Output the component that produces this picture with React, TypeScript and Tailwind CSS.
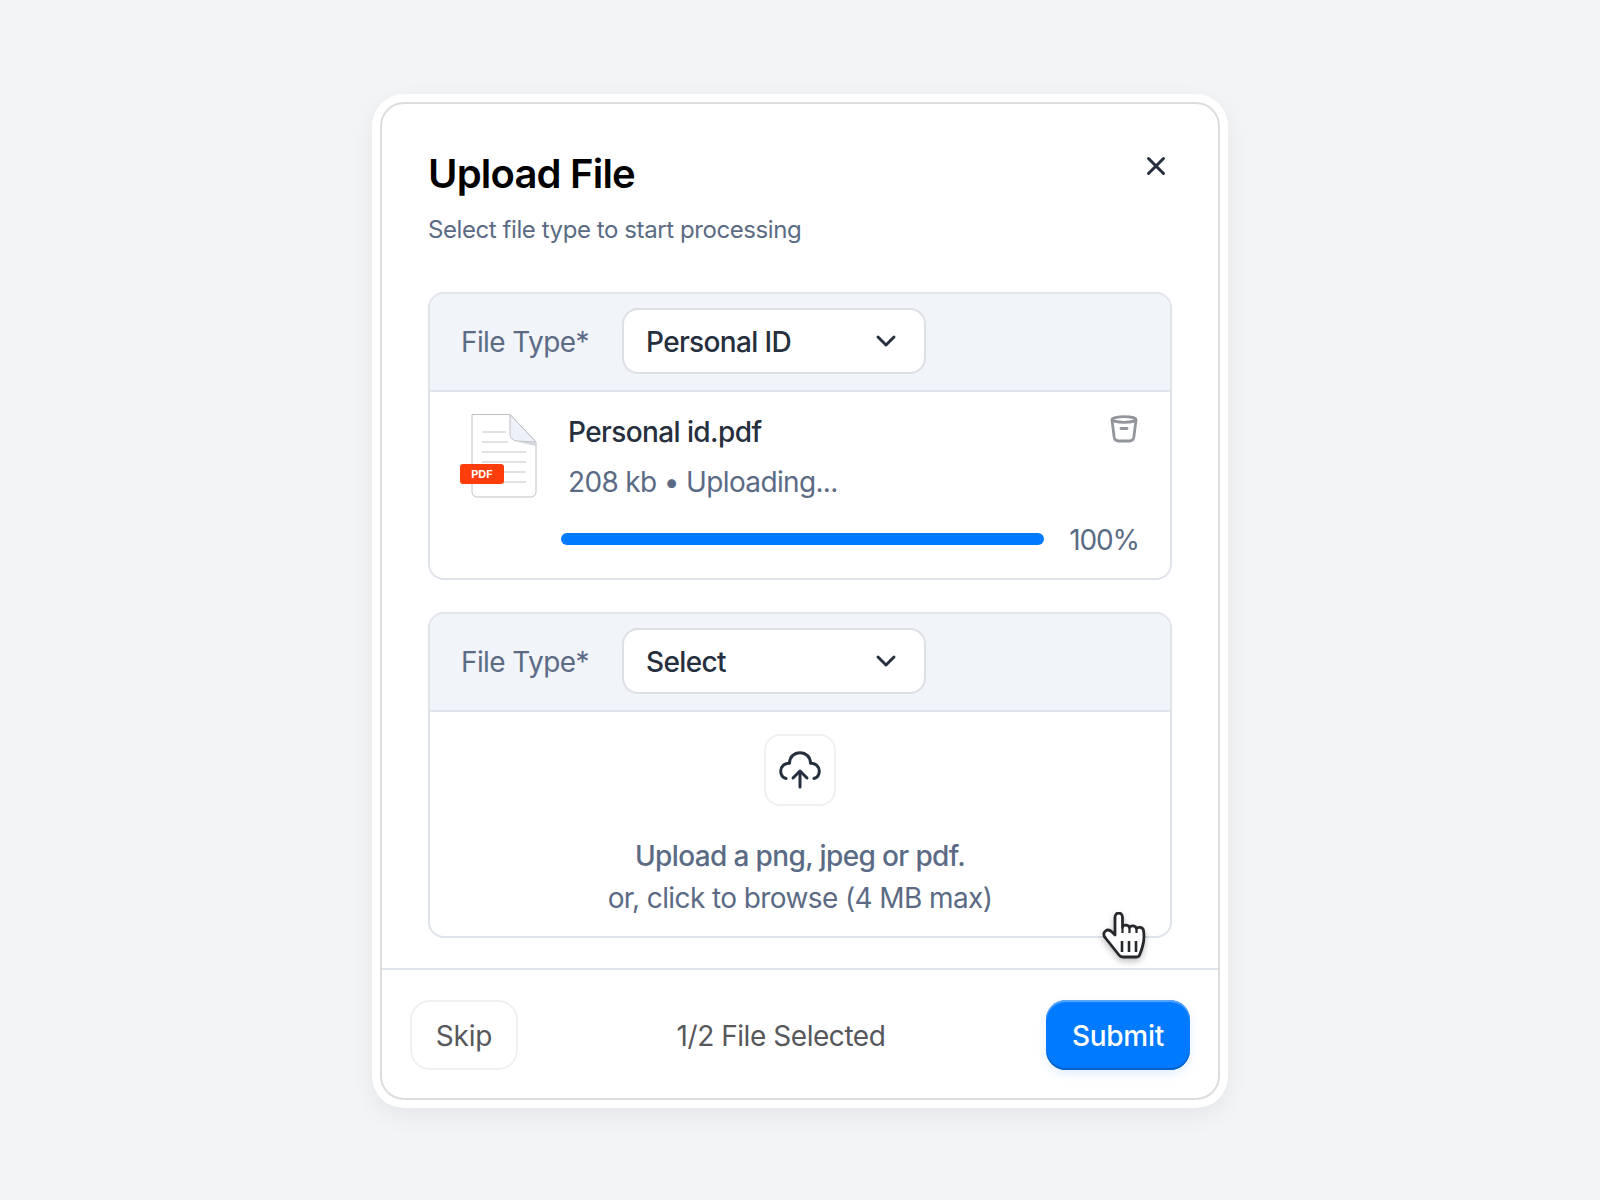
import React from 'react';
import { ChevronDown, X } from 'lucide-react';

const FileTypeHeader: React.FC<{ value: string }> = ({ value }) => (
  <div className="flex h-[98px] items-center border-b-2 border-[#dfe3ea] bg-[#f1f4f9] pl-[31px]">
    <span className="w-[161px] text-[28px] tracking-[-0.6px] text-[#5b6b85]">File Type*</span>
    <button className="-mt-[2px] flex h-[66px] w-[304px] items-center justify-between rounded-2xl border-2 border-[#dcdfe4] bg-white pr-[22px] pl-[22px] text-[28px] font-medium tracking-[-0.65px] text-[#262f3d]">
      <span className="mt-[2px]">{value}</span>
      <ChevronDown className="h-8 w-8 text-[#262f3d]" strokeWidth={2.2} />
    </button>
  </div>
);

const PdfIcon = () => (
  <svg width="80" height="88" viewBox="0 0 80 88" fill="none">
    <path d="M14 2.500H52L78 30V80a5 5 0 0 1-5 5H19a5 5 0 0 1-5-5Z" fill="#fff" stroke="#bdc0c5" strokeWidth="1" />
    <path d="M52 2.500V22a7 7 0 0 0 7 7L78 30Z" fill="#eef1f7" stroke="#bdc0c5" strokeWidth="1" />
    <path d="M56 29L78 30.500V34Z" fill="#d3d6db" />
    <g stroke="#c4c6c9" strokeWidth="1.2">
      <path d="M24 20H48" />
      <path d="M24 30H50" />
      <path d="M24 40H68" />
      <path d="M24 50H68" />
      <path d="M46 60H68" />
      <path d="M46 70H68" />
    </g>
    <rect x="2" y="52" width="44" height="20" rx="3" fill="#ff3d0a" />
    <text x="24" y="66" textAnchor="middle" fill="#fff" fontSize="11" fontWeight="700" fontFamily="Inter, sans-serif">PDF</text>
  </svg>
);

const TrashIcon = () => (
  <svg width="30" height="30" viewBox="0 0 30 30" fill="none" stroke="#92969c" strokeWidth="2.8" strokeLinecap="round" strokeLinejoin="round">
    <ellipse cx="15" cy="5.500" rx="12" ry="2.800" />
    <path d="M3 6l2.200 17.500a4.500 4.500 0 0 0 4.400 3.500h10.800a4.500 4.500 0 0 0 4.400-3.500L27 6" />
    <path d="M12 14.500h6" />
  </svg>
);

const CloudIcon = () => (
  <svg width="42" height="38" viewBox="0 0 42 38" fill="none" stroke="#262f3d" strokeWidth="3" strokeLinecap="round" strokeLinejoin="round">
    <path d="M7 27.500C3.500 26.500 1.700 23.500 1.700 20C1.700 15.500 5.500 12 10.500 12.300C10.500 6 15 1.700 21 1.700C27 1.700 31.500 6 31.500 12.300C36.500 12 40.300 15.500 40.300 20C40.300 23.500 38.500 26.500 35 27.500" />
    <path d="M21 36V21" />
    <path d="M14 27l7-7 7 7" />
  </svg>
);

const HandCursor = () => (
  <svg width="46" height="50" viewBox="0 0 46 50" className="drop-shadow-[0_3px_3px_rgba(0,0,0,0.25)]">
    <path
      d="M13 5.500c0-6 7.500-6 7.500 0V15c1-2.500 6-2.500 7 .5 1.500-2.500 6-2 7 1 1.500-2 6.500-1.500 7 2 .8 5 .5 11-1 16-.7 2.500-1.500 5-2.500 7.500-.5 2-1.500 3-3.500 3H21c-2 0-3-.5-4-2L3.500 26c-2.500-3-2-5.500 0-7 2-1.500 4.500-1 6.500 1l3 3Z"
      fill="#fff"
      stroke="#26282c"
      strokeWidth="2.800"
      strokeLinejoin="round"
    />
    <path d="M20.500 15v6M27.500 15.500V21M34.500 16.500V21" stroke="#26282c" strokeWidth="2.200" fill="none" />
    <path d="M20 29v11M27 29v11M34 29v11" stroke="#26282c" strokeWidth="2.600" fill="none" />
  </svg>
);

export default function App() {
  return (
    <div className="flex h-[1200px] justify-center bg-[#f3f4f6] pt-[94px] font-['Inter',sans-serif]">
      <div className="h-[1014px] w-[856px] rounded-[32px] bg-white p-2 shadow-[0_8px_24px_rgba(17,24,39,0.06)]">
        <div className="flex h-full flex-col rounded-3xl border-2 border-[#dcdde0]">
          <div className="relative px-[46px] pt-[46px]">
            <h1 className="text-[40px] leading-[48px] font-semibold tracking-[-0.8px] text-black">Upload File</h1>
            <p className="mt-[16px] text-2xl leading-8 tracking-[-0.42px] text-[#5b6b85]">Select file type to start processing</p>
            <button className="absolute top-[47px] right-[47px] text-[#262f3d]">
              <X className="h-[30px] w-[30px]" strokeWidth={2.4} />
            </button>
          </div>

          <div className="mt-[46px] flex flex-col gap-8 px-[46px]">
            <div className="h-[288px] overflow-hidden rounded-2xl border-2 border-[#dfe3ea]">
              <FileTypeHeader value="Personal ID" />
              <div className="flex pt-[20px] pl-[28px]">
                <PdfIcon />
                <div className="ml-[30px] flex-1">
                  <div className="flex items-start justify-between pr-[31px]">
                    <div>
                      <p className="text-[28px] leading-[40px] font-medium tracking-[-0.6px] text-[#262f3d]">Personal id.pdf</p>
                      <p className="mt-[10px] text-[28px] leading-[40px] tracking-[-0.65px] text-[#5b6b85]">208 kb • Uploading...</p>
                    </div>
                    <div className="mt-[2px]">
                      <TrashIcon />
                    </div>
                  </div>
                  <div className="mt-[18px] flex items-center pr-[31px]">
                    <div className="-ml-[7px] h-3 w-[483px] rounded-full bg-[#007aff]" />
                    <span className="mt-[2px] ml-auto text-[28px] leading-[36px] tracking-[-1.1px] text-[#5b6b85]">100%</span>
                  </div>
                </div>
              </div>
            </div>

            <div className="relative h-[326px] rounded-2xl border-2 border-[#dfe3ea]">
              <div className="overflow-hidden rounded-t-[14px]">
                <FileTypeHeader value="Select" />
              </div>
              <div className="flex flex-col items-center pt-[22px]">
                <div className="flex h-[72px] w-[72px] items-center justify-center rounded-2xl border-2 border-[#f0f0f1]">
                  <CloudIcon />
                </div>
                <p className="mt-[30px] text-[28px] leading-[40px] font-medium tracking-[-0.63px] text-[#5b6b85]">Upload a png, jpeg or pdf.</p>
                <p className="mt-[2px] text-[28px] leading-[40px] tracking-[-0.6px] text-[#5b6b85]">or, click to browse (4 MB max)</p>
              </div>
              <div className="absolute top-[298px] left-[672px]">
                <HandCursor />
              </div>
            </div>
          </div>

          <div className="mt-[30px] flex flex-1 items-center justify-between border-t-2 border-[#dfe3ea] px-[28px] pt-[2px]">
            <button className="flex h-[70px] w-[108px] items-center justify-center rounded-[20px] border-2 border-[#f0f0f1] pt-[2px] text-[28px] tracking-[-0.2px] text-[#56585c]">Skip</button>
            <span className="mt-[2px] -ml-[2px] text-[28px] tracking-[-0.45px] text-[#56585c]">1/2 File Selected</span>
            <button className="flex h-[70px] w-[144px] items-center justify-center rounded-[20px] bg-[#007aff] pt-[2px] text-[28px] font-medium tracking-[-0.3px] text-white shadow-[inset_0_2px_1px_#5aa5ff,inset_0_-2px_1px_#0560c9,0_4px_10px_rgba(10,124,255,0.12)]">Submit</button>
          </div>
        </div>
      </div>
    </div>
  );
}
